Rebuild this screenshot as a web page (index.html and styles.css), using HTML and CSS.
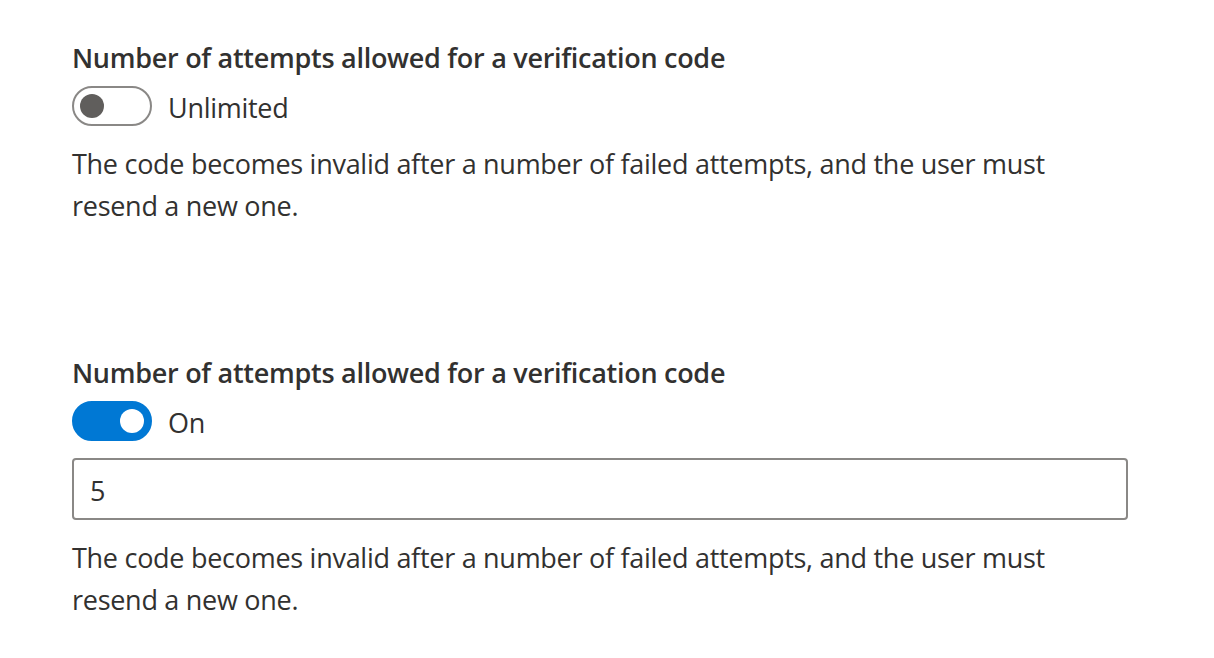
FILE: index.html
```html
<!DOCTYPE html>
<html lang="en">
<head>
<meta charset="utf-8">
<title>Verification code attempts</title>
<link rel="stylesheet" href="styles.css">
</head>
<body>
<main class="page">
  <section class="setting">
    <div class="label">Number of attempts allowed for a verification code</div>
    <div class="toggle-row">
      <span class="toggle toggle-off"><span class="thumb"></span></span>
      <span class="toggle-text">Unlimited</span>
    </div>
    <p class="help">The code becomes invalid after a number of failed attempts, and the user must resend a new one.</p>
  </section>
  <section class="setting">
    <div class="label">Number of attempts allowed for a verification code</div>
    <div class="toggle-row">
      <span class="toggle toggle-on"><span class="thumb"></span></span>
      <span class="toggle-text">On</span>
    </div>
    <div class="field"><span class="field-value">5</span></div>
    <p class="help">The code becomes invalid after a number of failed attempts, and the user must resend a new one.</p>
  </section>
</main>
</body>
</html>
```
FILE: styles.css
```css
html, body {
  margin: 0;
  padding: 0;
  background: #ffffff;
}
body {
  font-family: "Open Sans", "Noto Sans", sans-serif;
  font-size: 27px;
  letter-spacing: -0.28px;
  color: #323130;
}
.page {
  display: flex;
  flex-direction: column;
  gap: 116px;
  padding: 28px 0 0 72px;
  width: 1056px;
}
.setting {
  display: flex;
  flex-direction: column;
}
.label {
  font-weight: 600;
  line-height: 40px;
  padding: 10px 0 8px;
}
.toggle-row {
  display: flex;
  align-items: center;
  gap: 16px;
  height: 40px;
  margin-bottom: 17px;
}
.toggle {
  box-sizing: border-box;
  width: 80px;
  height: 40px;
  border-radius: 20px;
  border: 2px solid #8a8886;
  display: flex;
  align-items: center;
  padding: 0 6px;
}
.toggle .thumb {
  width: 24px;
  height: 24px;
  border-radius: 50%;
  background: #605e5c;
}
.toggle-on {
  background: #0078d4;
  border-color: #0078d4;
  justify-content: flex-end;
}
.toggle-on .thumb {
  background: #ffffff;
}
.toggle-text {
  line-height: 40px;
  padding-top: 3px;
}
.field {
  box-sizing: border-box;
  height: 62px;
  border: 2px solid #8a8886;
  border-radius: 4px;
  display: flex;
  align-items: center;
  padding: 3px 16px 0;
  margin-bottom: 17px;
}
.help {
  margin: 0;
  line-height: 42px;
}
```
